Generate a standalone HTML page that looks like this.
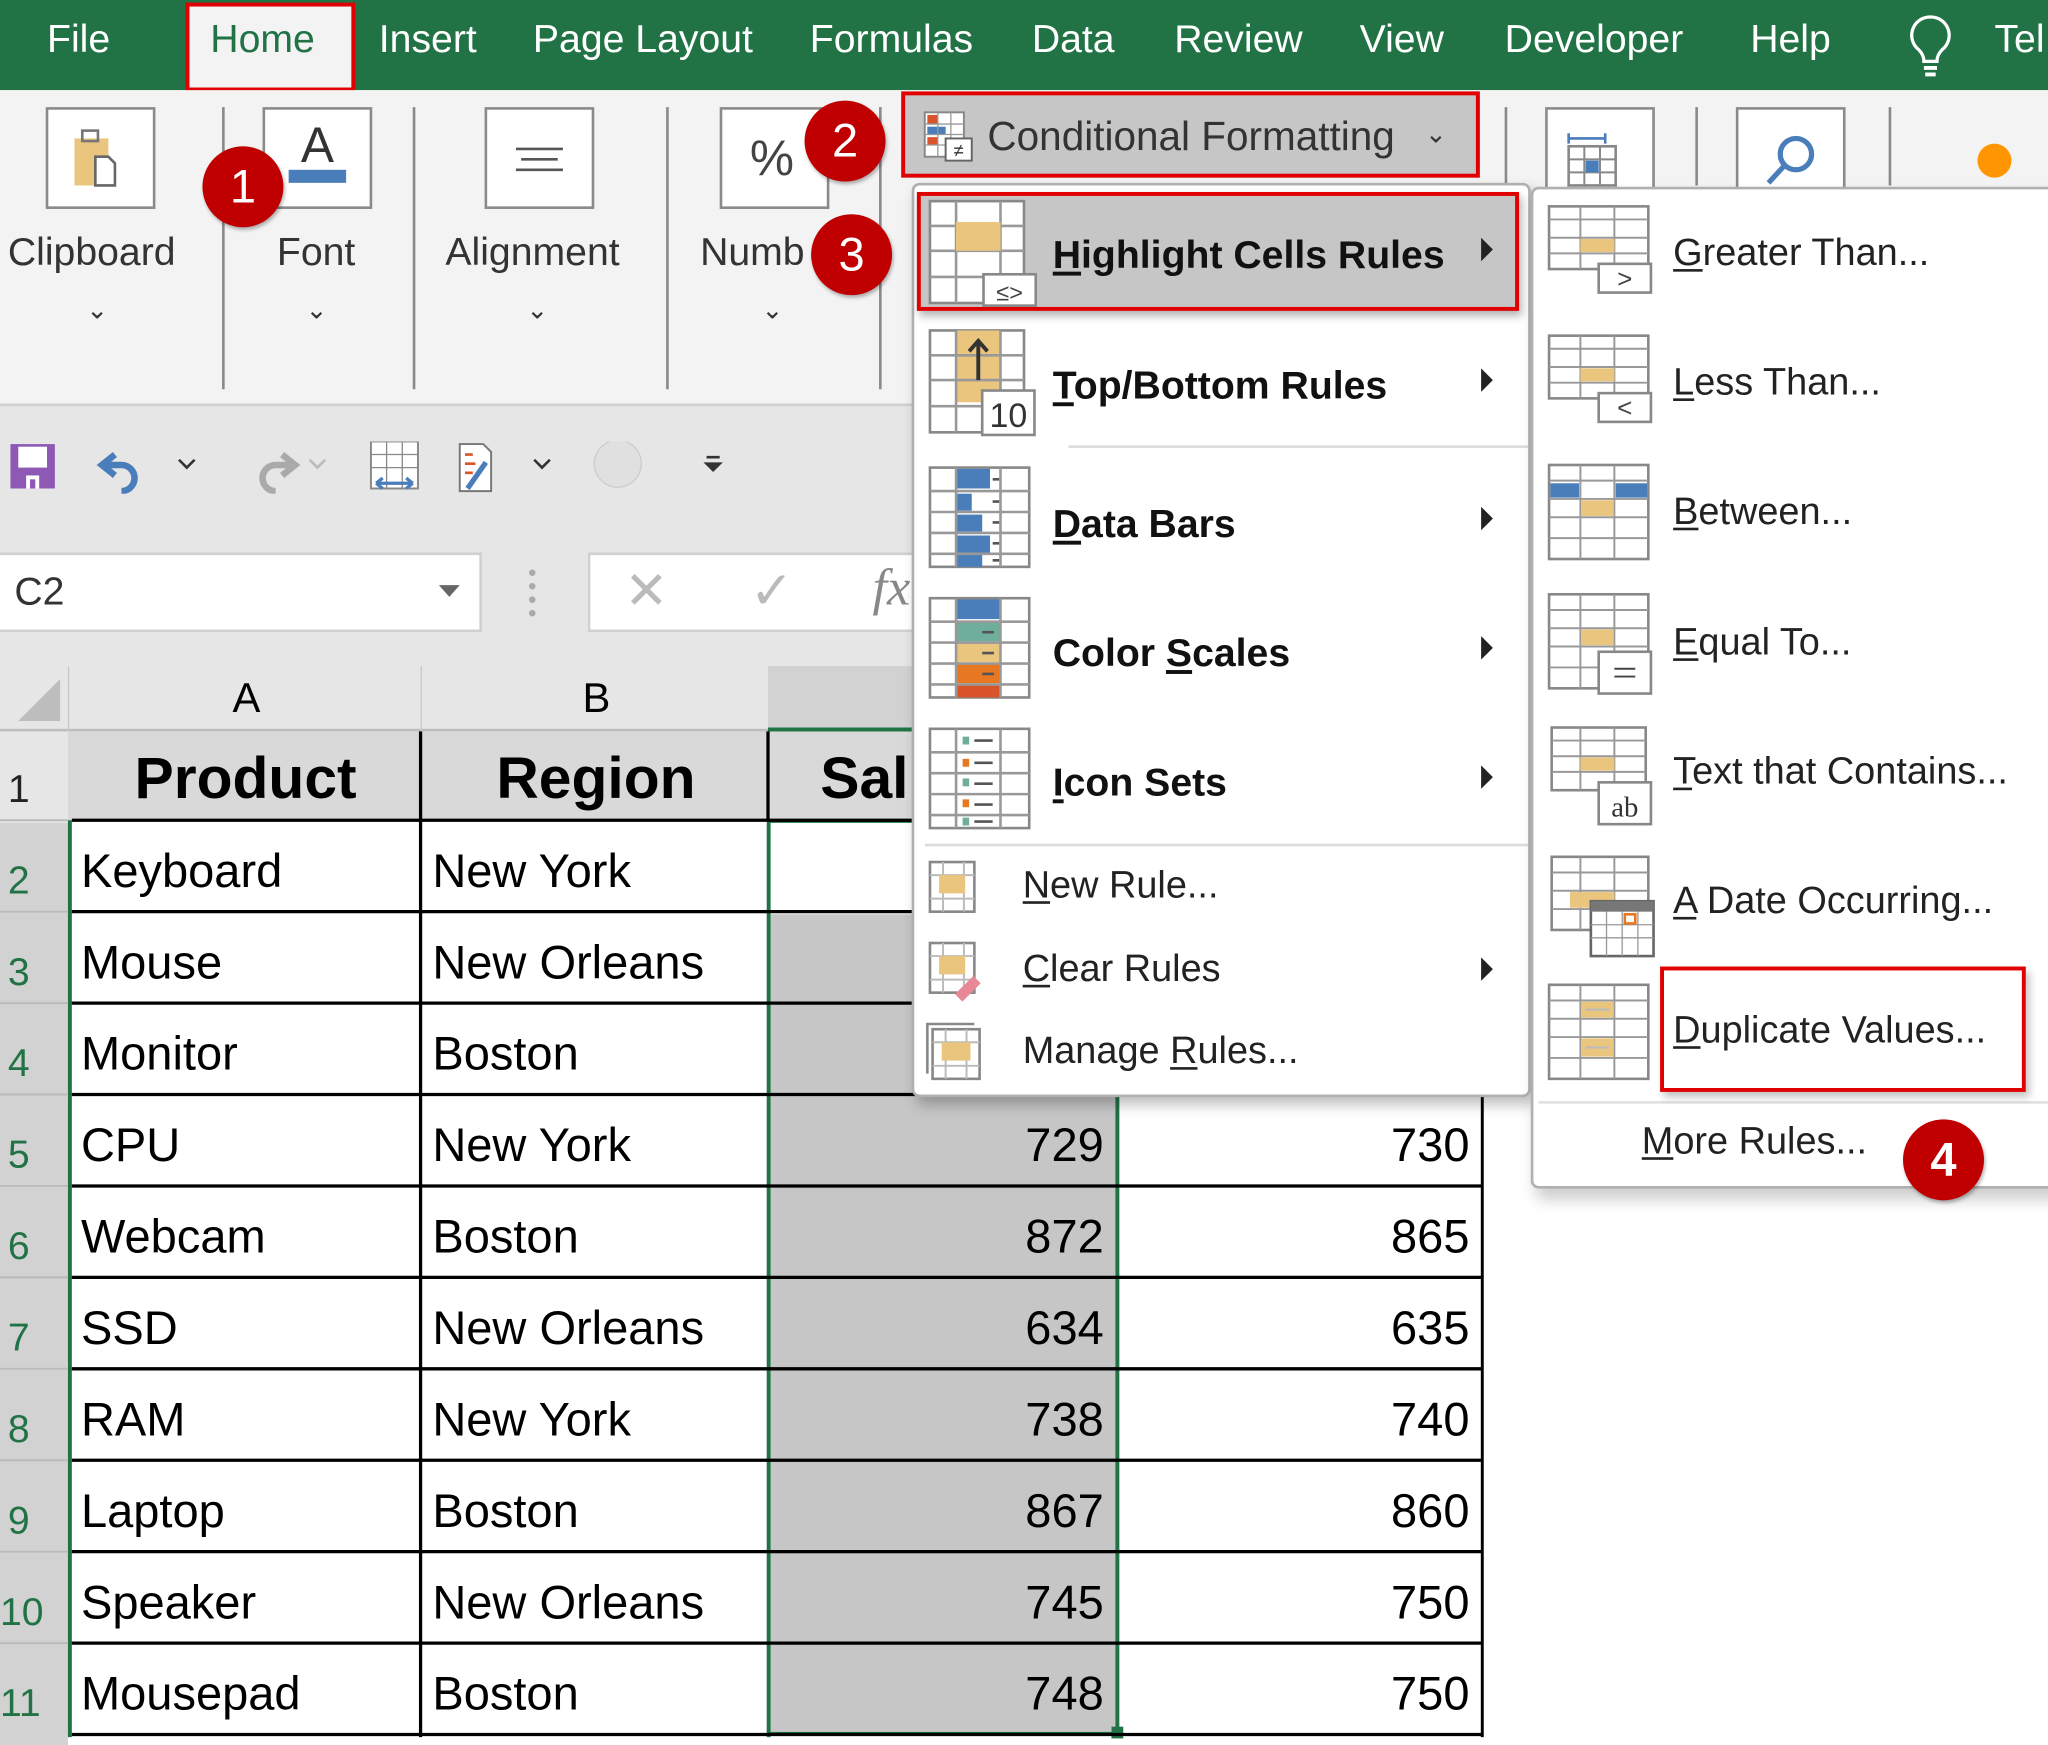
<!DOCTYPE html>
<html><head><meta charset="utf-8">
<style>
*{margin:0;padding:0;box-sizing:border-box}
html,body{width:2048px;height:1744px;overflow:hidden;background:#fff}
#w{position:absolute;left:0;top:0;width:1568px;height:1336px;transform:scale(1.30612);transform-origin:0 0;font-family:"Liberation Sans",sans-serif;background:#e6e6e6;overflow:hidden}
.a{position:absolute}
.tab{position:absolute;top:14px;color:#fff;font-size:30px;white-space:nowrap}
.gbox{position:absolute;top:82px;width:84px;height:78px;background:#fff;border:2px solid #8a8a8a}
.glab{position:absolute;top:177px;font-size:30px;color:#333;white-space:nowrap}
.chev{position:absolute;top:225px;font-size:20px;color:#333}
.sep{position:absolute;top:82px;width:2px;height:216px;background:#8a8a8a}
.badge{position:absolute;width:62px;height:62px;border-radius:50%;background:#c00000;color:#fff;font-size:36px;text-align:center;line-height:62px;box-shadow:1px 2px 3px rgba(0,0,0,.3)}
.mi{position:absolute;font-size:30px;font-weight:bold;color:#111;white-space:nowrap}
.ms{position:absolute;font-size:29px;color:#222;white-space:nowrap}
.arr{position:absolute;width:0;height:0;border-top:9px solid transparent;border-bottom:9px solid transparent;border-left:9px solid #222}
.cell{position:absolute;font-size:36px;color:#000;white-space:nowrap}
.rn{position:absolute;left:0;width:52px;font-size:30px;color:#217346;padding-left:6px}
u{text-decoration:underline;text-underline-offset:3px}
</style></head><body>
<div id="w">
<div class="a" style="left:0;top:0;width:1568px;height:69px;background:#217346"></div>
<div class="a" style="left:145px;top:4px;width:125px;height:66px;background:#f3f3f3"></div>
<div class="a" style="left:142px;top:2px;width:130px;height:68px;border:3px solid #e00000"></div>
<div class="tab" style="left:36px">File</div>
<div class="tab" style="left:161px;color:#217346">Home</div>
<div class="tab" style="left:290px">Insert</div>
<div class="tab" style="left:408px">Page Layout</div>
<div class="tab" style="left:620px">Formulas</div>
<div class="tab" style="left:790px">Data</div>
<div class="tab" style="left:899px">Review</div>
<div class="tab" style="left:1041px">View</div>
<div class="tab" style="left:1152px">Developer</div>
<div class="tab" style="left:1340px">Help</div>
<svg class="a" style="left:1460px;top:10px" width="36" height="52"><path d="M18 3a14 14 0 0 0-9 25c3 3 4 6 4 9h10c0-3 1-6 4-9A14 14 0 0 0 18 3z" fill="none" stroke="#fff" stroke-width="2.5"/><path d="M13 42h10M14 47h8" stroke="#fff" stroke-width="3"/></svg>
<div class="tab" style="left:1527px">Tel</div>
<div class="a" style="left:0;top:69px;width:1568px;height:242px;background:#f3f3f3;border-bottom:2px solid #d0d0d0"></div>
<div class="gbox" style="left:35px"><svg width="80" height="74"><rect x="20" y="22" width="26" height="36" fill="#eac57e"/><rect x="26" y="16" width="12" height="8" fill="none" stroke="#777" stroke-width="2"/><path d="M36 36h10l5 5v17H36z" fill="#fff" stroke="#666" stroke-width="2"/></svg></div>
<div class="gbox" style="left:201px"><svg width="80" height="74"><text x="40" y="40" font-size="38" text-anchor="middle" fill="#333" font-family="Liberation Sans">A</text><rect x="18" y="46" width="44" height="10" fill="#4a7ebb"/></svg></div>
<div class="gbox" style="left:371px"><svg width="80" height="74"><path d="M22 30h36M26 38h28M22 46h36" stroke="#555" stroke-width="2"/></svg></div>
<div class="gbox" style="left:551px"><svg width="80" height="74"><text x="38" y="50" font-size="38" text-anchor="middle" fill="#444" font-family="Liberation Sans">%</text></svg></div>
<div class="glab" style="left:6px">Clipboard</div><div class="chev" style="left:66px">&#8964;</div>
<div class="glab" style="left:212px">Font</div><div class="chev" style="left:234px">&#8964;</div>
<div class="glab" style="left:341px">Alignment</div><div class="chev" style="left:403px">&#8964;</div>
<div class="glab" style="left:536px">Numb</div><div class="chev" style="left:583px">&#8964;</div>
<div class="sep" style="left:170px"></div><div class="sep" style="left:316px"></div><div class="sep" style="left:510px"></div><div class="sep" style="left:673px"></div>
<div class="sep" style="left:1152px;height:60px"></div><div class="sep" style="left:1298px;height:60px"></div><div class="sep" style="left:1446px;height:60px"></div>
<div class="gbox" style="left:1183px;height:70px"><svg width="80" height="66"><path d="M16 22h28M16 18v8M44 18v8" stroke="#4a7ebb" stroke-width="2"/><rect x="16" y="28" width="36" height="30" fill="none" stroke="#888" stroke-width="2"/><path d="M28 28v30M40 28v30M16 38h36M16 48h36" stroke="#888" stroke-width="1.5"/><rect x="29" y="39" width="10" height="9" fill="#4a7ebb"/></svg></div>
<div class="gbox" style="left:1329px;height:70px"><svg width="80" height="66"><circle cx="44" cy="34" r="12" fill="none" stroke="#4a7ebb" stroke-width="4"/><path d="M35 43l-12 13" stroke="#4a7ebb" stroke-width="4"/></svg></div>
<div class="a" style="left:1514px;top:110px;width:26px;height:26px;border-radius:50%;background:#ff9500"></div>
<div class="a" style="left:690px;top:70px;width:443px;height:66px;background:#c6c6c6;border:3px solid #e00000"></div>
<svg class="a" style="left:706px;top:84px" width="42" height="42"><rect x="2" y="2" width="30" height="34" fill="#fff" stroke="#888" stroke-width="1.5"/><rect x="4" y="4" width="8" height="7" fill="#d9542b"/><rect x="4" y="13" width="14" height="6" fill="#4a7ebb"/><rect x="4" y="21" width="8" height="6" fill="#d9542b"/><path d="M12 2v34M22 2v34M2 11h30M2 19h30M2 27h30" stroke="#999" stroke-width="1"/><rect x="18" y="22" width="20" height="17" fill="#fff" stroke="#666" stroke-width="1.5"/><text x="28" y="36" font-size="14" text-anchor="middle" fill="#333">&#8800;</text></svg>
<div class="a" style="left:756px;top:87px;font-size:31px;color:#333;white-space:nowrap">Conditional Formatting</div>
<div class="a" style="left:1091px;top:90px;font-size:20px;color:#333">&#8964;</div>
<div class="a" style="left:0;top:423px;width:369px;height:61px;background:#fff;border:2px solid #d0d0d0;border-left:none"></div>
<div class="a" style="left:11px;top:437px;font-size:30px;color:#333">C2</div>
<div class="a" style="left:336px;top:448px;width:0;height:0;border-left:8px solid transparent;border-right:8px solid transparent;border-top:9px solid #666"></div>
<div class="a" style="left:405px;top:436px;width:6px;height:36px;border-left:5px dotted #aaa"></div>
<div class="a" style="left:450px;top:423px;width:260px;height:61px;background:#fff;border:2px solid #d0d0d0"></div>
<div class="a" style="left:478px;top:430px;font-size:40px;color:#bbb">&#10005;</div>
<div class="a" style="left:574px;top:430px;font-size:40px;color:#bbb">&#10003;</div>
<div class="a" style="left:668px;top:426px;font-size:40px;font-style:italic;color:#888;font-family:'Liberation Serif',serif">fx</div>
<svg class="a" style="left:6px;top:338px" width="560" height="40"><rect x="2" y="2" width="34" height="34" fill="#8e59b5"/><rect x="8" y="4" width="22" height="16" fill="#fff"/><rect x="14" y="26" width="10" height="10" fill="#fff"/><rect x="17" y="29" width="4" height="7" fill="#8e59b5"/>
<path d="M82 10l-10 8 10 8M73 18h14a10 10 0 0 1 0 20" fill="none" stroke="#4a7ebb" stroke-width="5"/><path d="M131 14l6 6 6-6" fill="none" stroke="#333" stroke-width="2"/>
<path d="M210 10l10 8-10 8M219 18h-14a10 10 0 0 0 0 20" fill="none" stroke="#aaa" stroke-width="5"/><path d="M231 14l6 6 6-6" fill="none" stroke="#bbb" stroke-width="2"/>
<rect x="278" y="0" width="36" height="36" fill="#fff" stroke="#888" stroke-width="1.5"/><path d="M278 10h36M278 20h36M290 0v36M302 0v36" stroke="#888"/><path d="M282 32h28M282 32l5-4M282 32l5 4M310 32l-5-4M310 32l-5 4" stroke="#4a7ebb" stroke-width="2.5" fill="none"/>
<path d="M346 2h18l6 6v30h-24z" fill="#fff" stroke="#777" stroke-width="1.5"/><path d="M350 10h6M350 17h8M350 24h6" stroke="#d9542b" stroke-width="2"/><path d="M352 36l14-20" stroke="#4a7ebb" stroke-width="4"/><path d="M403 14l6 6 6-6" fill="none" stroke="#333" stroke-width="2"/>
<ellipse cx="467" cy="17" rx="18" ry="18" fill="#e0e0e0" stroke="#ccc"/><path d="M535 12h10M535 17l5 5 5-5z" stroke="#333" stroke-width="2" fill="#333"/></svg>
<div class="a" style="left:0;top:510px;width:1568px;height:50px;background:#e6e6e6;border-bottom:2px solid #bdbdbd"></div>
<div class="a" style="left:14px;top:520px;width:0;height:0;border-left:32px solid transparent;border-bottom:32px solid #bdbdbd"></div>
<div class="a" style="left:52px;top:510px;width:1px;height:50px;background:#c8c8c8"></div>
<div class="a" style="left:322px;top:510px;width:1px;height:50px;background:#c8c8c8"></div>
<div class="a" style="left:588px;top:510px;width:270px;height:50px;background:#d2d2d2;border-bottom:3px solid #217346"></div>
<div class="a" style="left:178px;top:516px;font-size:32px">A</div>
<div class="a" style="left:446px;top:516px;font-size:32px">B</div>
<div class="a" style="left:0;top:560px;width:52px;height:70px;background:#e6e6e6"></div>
<div class="a" style="left:0;top:630px;width:52px;height:706px;background:#d2d2d2"></div>
<div class="a" style="left:52px;top:560px;width:1516px;height:776px;background:#fff"></div>
<div class="a" style="left:52px;top:560px;width:1084px;height:69px;background:#d9d9d9"></div>
<div class="a" style="left:590px;top:700px;width:266px;height:628px;background:#c6c6c6"></div>
<div class="a" style="left:52px;top:628px;width:3px;height:702px;background:#217346"></div>
<div class="a" style="left:587px;top:628px;width:3px;height:702px;background:#217346"></div>
<div class="a" style="left:854px;top:628px;width:3px;height:702px;background:#217346"></div>
<div class="a" style="left:587px;top:1326px;width:270px;height:3px;background:#217346"></div>
<div class="a" style="left:588px;top:557px;width:270px;height:3px;background:#217346"></div>
<div class="a" style="left:588px;top:627px;width:270px;height:3px;background:#217346"></div>
<div class="a" style="left:851px;top:1322px;width:9px;height:9px;background:#217346"></div>
<svg class="a" style="left:0;top:555px" width="1568" height="780">
<g stroke="#000" stroke-width="2.5">
<path d="M55 73h1081M55 143h1081M55 213h1081M55 283h1081M55 353h1081M55 423h1081M55 493h1081M55 563h1081M55 633h1081M55 703h1081M55 773h1081"/>
<path d="M322 5v770M588 5v68M1135 5v770"/>
</g>
<path d="M0 73h52M0 143h52M0 213h52M0 283h52M0 353h52M0 423h52M0 493h52M0 563h52M0 633h52M0 703h52" stroke="#bbb" stroke-width="1.5"/>
</svg>
<div class="rn" style="top:588px;color:#222">1</div>
<div class="rn" style="top:658px">2</div><div class="rn" style="top:728px">3</div><div class="rn" style="top:798px">4</div><div class="rn" style="top:868px">5</div><div class="rn" style="top:938px">6</div><div class="rn" style="top:1008px">7</div><div class="rn" style="top:1078px">8</div><div class="rn" style="top:1148px">9</div><div class="rn" style="top:1218px;padding-left:0">10</div><div class="rn" style="top:1288px;padding-left:0">11</div>
<div class="cell" style="left:103px;top:570px;font-size:45px;font-weight:bold">Product</div>
<div class="cell" style="left:380px;top:570px;font-size:45px;font-weight:bold">Region</div>
<div class="cell" style="left:628px;top:570px;font-size:45px;font-weight:bold">Sal</div>
<div class="cell" style="left:62px;top:646px">Keyboard</div><div class="cell" style="left:331px;top:646px">New York</div>
<div class="cell" style="left:62px;top:716px">Mouse</div><div class="cell" style="left:331px;top:716px">New Orleans</div>
<div class="cell" style="left:62px;top:786px">Monitor</div><div class="cell" style="left:331px;top:786px">Boston</div>
<div class="cell" style="left:62px;top:856px">CPU</div><div class="cell" style="left:331px;top:856px">New York</div><div class="cell" style="left:785px;top:856px">729</div><div class="cell" style="left:1065px;top:856px">730</div>
<div class="cell" style="left:62px;top:926px">Webcam</div><div class="cell" style="left:331px;top:926px">Boston</div><div class="cell" style="left:785px;top:926px">872</div><div class="cell" style="left:1065px;top:926px">865</div>
<div class="cell" style="left:62px;top:996px">SSD</div><div class="cell" style="left:331px;top:996px">New Orleans</div><div class="cell" style="left:785px;top:996px">634</div><div class="cell" style="left:1065px;top:996px">635</div>
<div class="cell" style="left:62px;top:1066px">RAM</div><div class="cell" style="left:331px;top:1066px">New York</div><div class="cell" style="left:785px;top:1066px">738</div><div class="cell" style="left:1065px;top:1066px">740</div>
<div class="cell" style="left:62px;top:1136px">Laptop</div><div class="cell" style="left:331px;top:1136px">Boston</div><div class="cell" style="left:785px;top:1136px">867</div><div class="cell" style="left:1065px;top:1136px">860</div>
<div class="cell" style="left:62px;top:1206px">Speaker</div><div class="cell" style="left:331px;top:1206px">New Orleans</div><div class="cell" style="left:785px;top:1206px">745</div><div class="cell" style="left:1065px;top:1206px">750</div>
<div class="cell" style="left:62px;top:1276px">Mousepad</div><div class="cell" style="left:331px;top:1276px">Boston</div><div class="cell" style="left:785px;top:1276px">748</div><div class="cell" style="left:1065px;top:1276px">750</div>
<div class="a" style="left:1136px;top:560px;width:432px;height:776px;background:#fff"></div>
<div class="a" style="left:698px;top:140px;width:474px;height:700px;background:#fff;border:2px solid #b0b0b0;border-radius:6px;box-shadow:4px 6px 10px rgba(0,0,0,.25)"></div>
<div class="a" style="left:702px;top:147px;width:461px;height:91px;background:#c6c6c6;border:3px solid #e00000;box-shadow:2px 4px 6px rgba(0,0,0,.3)"></div>
<div class="a" style="left:818px;top:341px;width:352px;height:2px;background:#ddd"></div>
<div class="a" style="left:708px;top:646px;width:462px;height:2px;background:#ddd"></div>
<svg class="a" style="left:710px;top:152px" width="84" height="84"><rect x="2" y="2" width="72" height="78" fill="#fff" stroke="#888" stroke-width="2"/><path d="M22 2v78M56 2v78M2 21h72M2 40h72M2 60h72" stroke="#999" stroke-width="2"/><rect x="22" y="18" width="34" height="22" fill="#eac57e"/><rect x="43" y="58" width="40" height="24" fill="#fff" stroke="#888" stroke-width="2"/><text x="63" y="78" font-size="18" text-anchor="middle" fill="#444">&#8804;&gt;</text></svg>
<svg class="a" style="left:710px;top:251px" width="84" height="84"><rect x="2" y="2" width="72" height="78" fill="#fff" stroke="#888" stroke-width="2"/><rect x="22" y="2" width="34" height="55" fill="#eac57e"/><path d="M22 2v78M56 2v78M2 21h72M2 40h72M2 60h72" stroke="#999" stroke-width="2"/><path d="M39 40V10M32 18l7-8 7 8" stroke="#333" stroke-width="3" fill="none"/><rect x="42" y="48" width="40" height="34" fill="#fff" stroke="#888" stroke-width="2"/><text x="62" y="76" font-size="26" text-anchor="middle" fill="#333">10</text></svg>
<svg class="a" style="left:710px;top:356px" width="84" height="84"><rect x="2" y="2" width="76" height="76" fill="#fff" stroke="#888" stroke-width="2"/><rect x="22" y="3" width="26" height="15" fill="#4a7ebb"/><rect x="22" y="22" width="12" height="13" fill="#4a7ebb"/><rect x="22" y="38" width="20" height="13" fill="#4a7ebb"/><rect x="22" y="54" width="26" height="13" fill="#4a7ebb"/><rect x="22" y="68" width="20" height="10" fill="#4a7ebb"/><path d="M22 2v76M56 2v76M2 20h76M2 36h76M2 52h76M2 68h76" stroke="#999" stroke-width="2"/><path d="M50 11h5M50 28h5M50 44h5M50 60h5M50 73h5" stroke="#555" stroke-width="2"/></svg>
<svg class="a" style="left:710px;top:456px" width="84" height="84"><rect x="2" y="2" width="76" height="76" fill="#fff" stroke="#888" stroke-width="2"/><rect x="22" y="3" width="34" height="15" fill="#4a7ebb"/><rect x="22" y="20" width="34" height="15" fill="#6fae9a"/><rect x="22" y="36" width="34" height="15" fill="#eac57e"/><rect x="22" y="52" width="34" height="15" fill="#e87722"/><rect x="22" y="68" width="34" height="10" fill="#d9542b"/><path d="M22 2v76M56 2v76M2 20h76M2 36h76M2 52h76M2 68h76" stroke="#999" stroke-width="2"/><path d="M42 28h9M42 44h9M42 60h9" stroke="#555" stroke-width="2"/></svg>
<svg class="a" style="left:710px;top:556px" width="84" height="84"><rect x="2" y="2" width="76" height="76" fill="#fff" stroke="#888" stroke-width="2"/><path d="M22 2v76M56 2v76M2 20h76M2 36h76M2 52h76M2 68h76" stroke="#999" stroke-width="2"/><g fill="#6fae9a"><rect x="27" y="8" width="5" height="6"/><rect x="27" y="40" width="5" height="6"/><rect x="27" y="70" width="5" height="6"/></g><g fill="#e87722"><rect x="27" y="25" width="5" height="6"/><rect x="27" y="56" width="5" height="6"/></g><path d="M36 11h14M36 28h14M36 44h14M36 60h14M36 73h14" stroke="#555" stroke-width="2"/></svg>
<svg class="a" style="left:710px;top:658px" width="44" height="44"><rect x="2" y="2" width="34" height="38" fill="#fff" stroke="#888" stroke-width="2"/><path d="M2 12h34M2 30h34M12 2v38M28 2v38" stroke="#bbb" stroke-width="1.5"/><rect x="9" y="12" width="20" height="14" fill="#eac57e"/></svg>
<svg class="a" style="left:710px;top:720px" width="44" height="48"><rect x="2" y="2" width="34" height="38" fill="#fff" stroke="#888" stroke-width="2"/><path d="M2 12h34M2 30h34M12 2v38M28 2v38" stroke="#bbb" stroke-width="1.5"/><rect x="9" y="12" width="20" height="14" fill="#eac57e"/><path d="M24 44l14-14" stroke="#e88897" stroke-width="8"/></svg>
<svg class="a" style="left:708px;top:782px" width="46" height="46"><path d="M2 40V2h36" fill="none" stroke="#888" stroke-width="2"/><rect x="6" y="6" width="36" height="38" fill="#fff" stroke="#888" stroke-width="2"/><path d="M6 16h36M6 34h36M16 6v38M32 6v38" stroke="#bbb" stroke-width="1.5"/><rect x="13" y="16" width="22" height="14" fill="#eac57e"/></svg>
<div class="mi" style="left:806px;top:179px"><u>H</u>ighlight Cells Rules</div>
<div class="mi" style="left:806px;top:279px"><u>T</u>op/Bottom Rules</div>
<div class="mi" style="left:806px;top:385px"><u>D</u>ata Bars</div>
<div class="mi" style="left:806px;top:484px">Color <u>S</u>cales</div>
<div class="mi" style="left:806px;top:583px"><u>I</u>con Sets</div>
<div class="ms" style="left:783px;top:662px"><u>N</u>ew Rule...</div>
<div class="ms" style="left:783px;top:726px"><u>C</u>lear Rules</div>
<div class="ms" style="left:783px;top:789px">Manage <u>R</u>ules...</div>
<div class="arr" style="left:1134px;top:182px"></div><div class="arr" style="left:1134px;top:282px"></div><div class="arr" style="left:1134px;top:388px"></div><div class="arr" style="left:1134px;top:487px"></div><div class="arr" style="left:1134px;top:586px"></div><div class="arr" style="left:1134px;top:733px"></div>
<div class="a" style="left:1172px;top:143px;width:420px;height:767px;background:#fff;border:2px solid #b0b0b0;border-radius:6px;box-shadow:4px 8px 12px rgba(0,0,0,.2)"></div>
<div class="a" style="left:1178px;top:843px;width:390px;height:2px;background:#e0e0e0"></div>
<div class="a" style="left:1271px;top:740px;width:280px;height:96px;border:3px solid #e00000;box-shadow:3px 4px 6px rgba(0,0,0,.25)"></div>
<svg class="a" style="left:1184px;top:156px" width="86" height="82"><rect x="2" y="2" width="76" height="48" fill="#fff" stroke="#888" stroke-width="2"/><path d="M26 2v48M52 2v48M2 12h76M2 26h76M2 38h76" stroke="#999" stroke-width="1.5"/><rect x="26" y="27" width="26" height="10" fill="#eac57e"/><rect x="40" y="46" width="40" height="22" fill="#fff" stroke="#888" stroke-width="2"/><text x="60" y="64" font-size="20" text-anchor="middle" fill="#444">&gt;</text></svg>
<svg class="a" style="left:1184px;top:255px" width="86" height="82"><rect x="2" y="2" width="76" height="48" fill="#fff" stroke="#888" stroke-width="2"/><path d="M26 2v48M52 2v48M2 12h76M2 26h76M2 38h76" stroke="#999" stroke-width="1.5"/><rect x="26" y="27" width="26" height="10" fill="#eac57e"/><rect x="40" y="46" width="40" height="22" fill="#fff" stroke="#888" stroke-width="2"/><text x="60" y="64" font-size="20" text-anchor="middle" fill="#444">&lt;</text></svg>
<svg class="a" style="left:1184px;top:354px" width="86" height="82"><rect x="2" y="2" width="76" height="72" fill="#fff" stroke="#888" stroke-width="2"/><path d="M26 2v72M52 2v72M2 14h76M2 28h76M2 42h76M2 58h76" stroke="#999" stroke-width="1.5"/><rect x="3" y="16" width="22" height="11" fill="#4a7ebb"/><rect x="53" y="16" width="24" height="11" fill="#4a7ebb"/><rect x="27" y="29" width="24" height="12" fill="#eac57e"/></svg>
<svg class="a" style="left:1184px;top:453px" width="86" height="82"><rect x="2" y="2" width="76" height="72" fill="#fff" stroke="#888" stroke-width="2"/><path d="M26 2v72M52 2v72M2 14h76M2 28h76M2 42h76M2 58h76" stroke="#999" stroke-width="1.5"/><rect x="27" y="29" width="24" height="12" fill="#eac57e"/><rect x="40" y="46" width="40" height="32" fill="#fff" stroke="#888" stroke-width="2"/><path d="M52 59h16M52 65h16" stroke="#444" stroke-width="1.5"/></svg>
<svg class="a" style="left:1184px;top:553px" width="86" height="82"><rect x="4" y="4" width="72" height="48" fill="#fff" stroke="#888" stroke-width="2"/><path d="M26 4v48M52 4v48M4 14h72M4 26h72M4 38h72" stroke="#999" stroke-width="1.5"/><rect x="26" y="27" width="26" height="10" fill="#eac57e"/><rect x="40" y="46" width="40" height="32" fill="#fff" stroke="#888" stroke-width="2"/><text x="60" y="72" font-size="22" text-anchor="middle" fill="#333" font-family="Liberation Serif">ab</text></svg>
<svg class="a" style="left:1184px;top:652px" width="86" height="82"><rect x="4" y="4" width="74" height="56" fill="#fff" stroke="#888" stroke-width="2"/><path d="M26 4v56M52 4v56M4 16h74M4 30h74M4 44h74" stroke="#999" stroke-width="1.5"/><rect x="18" y="31" width="34" height="12" fill="#eac57e"/><rect x="34" y="38" width="48" height="42" fill="#fff" stroke="#666" stroke-width="2"/><rect x="34" y="38" width="48" height="8" fill="#777"/><path d="M34 56h48M34 66h48M46 46v34M58 46v34M70 46v34" stroke="#999"/><rect x="60" y="48" width="8" height="7" fill="none" stroke="#e87722" stroke-width="2"/></svg>
<svg class="a" style="left:1184px;top:752px" width="86" height="82"><rect x="2" y="2" width="76" height="72" fill="#fff" stroke="#888" stroke-width="2"/><path d="M26 2v72M52 2v72M2 14h76M2 28h76M2 42h76M2 58h76" stroke="#999" stroke-width="1.5"/><rect x="27" y="15" width="24" height="12" fill="#eac57e"/><rect x="27" y="43" width="24" height="14" fill="#eac57e"/><path d="M30 21h18M30 50h18" stroke="#bbb" stroke-width="1.5"/></svg>
<div class="ms" style="left:1281px;top:178px"><u>G</u>reater Than...</div>
<div class="ms" style="left:1281px;top:277px"><u>L</u>ess Than...</div>
<div class="ms" style="left:1281px;top:376px"><u>B</u>etween...</div>
<div class="ms" style="left:1281px;top:476px"><u>E</u>qual To...</div>
<div class="ms" style="left:1281px;top:575px"><u>T</u>ext that Contains...</div>
<div class="ms" style="left:1281px;top:674px"><u>A</u> Date Occurring...</div>
<div class="ms" style="left:1281px;top:773px"><u>D</u>uplicate Values...</div>
<div class="ms" style="left:1257px;top:858px"><u>M</u>ore Rules...</div>
<div class="badge" style="left:155px;top:112px">1</div>
<div class="badge" style="left:616px;top:77px">2</div>
<div class="badge" style="left:621px;top:164px">3</div>
<div class="badge" style="left:1457px;top:857px;font-weight:bold">4</div>
</div>
</body></html>
